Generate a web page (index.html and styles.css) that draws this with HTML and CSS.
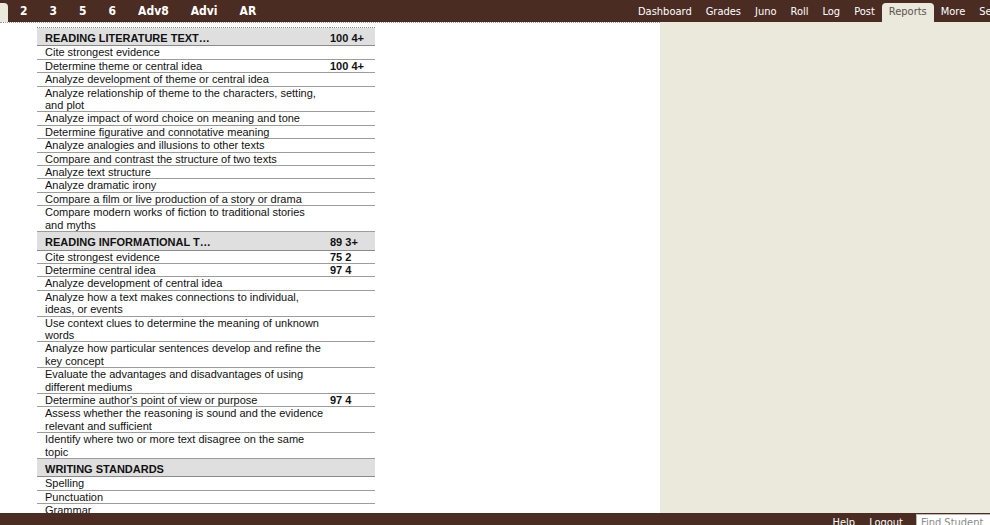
FILE: index.html
```html
<!DOCTYPE html>
<html>
<head>
<meta charset="utf-8">
<link rel="stylesheet" href="styles.css">
</head>
<body>
<div class="topbar">
  <nav class="nav-left">
    <span class="stub"></span>
    <a>2</a><a>3</a><a>5</a><a>6</a><a>Adv8</a><a>Advi</a><a>AR</a>
  </nav>
  <nav class="nav-right">
    <a>Dashboard</a><a>Grades</a><a>Juno</a><a>Roll</a><a>Log</a><a>Post</a><a class="active">Reports</a><a>More</a><a>Settings</a>
  </nav>
</div>
<div class="main">
  <div class="content">
    <table class="standards">
      <colgroup><col class="c-name"><col class="c-num"></colgroup>
      <tr class="head"><td>READING LITERATURE TEXT…</td><td class="num">100 4+</td></tr>
      <tr><td>Cite strongest evidence</td><td class="num"></td></tr>
      <tr><td>Determine theme or central idea</td><td class="num">100 4+</td></tr>
      <tr><td>Analyze development of theme or central idea</td><td class="num"></td></tr>
      <tr><td>Analyze relationship of theme to the characters, setting,<br>and plot</td><td class="num"></td></tr>
      <tr><td>Analyze impact of word choice on meaning and tone</td><td class="num"></td></tr>
      <tr><td>Determine figurative and connotative meaning</td><td class="num"></td></tr>
      <tr><td>Analyze analogies and illusions to other texts</td><td class="num"></td></tr>
      <tr><td>Compare and contrast the structure of two texts</td><td class="num"></td></tr>
      <tr><td>Analyze text structure</td><td class="num"></td></tr>
      <tr><td>Analyze dramatic irony</td><td class="num"></td></tr>
      <tr><td>Compare a film or live production of a story or drama</td><td class="num"></td></tr>
      <tr><td>Compare modern works of fiction to traditional stories<br>and myths</td><td class="num"></td></tr>
      <tr class="head"><td>READING INFORMATIONAL T…</td><td class="num">89 3+</td></tr>
      <tr><td>Cite strongest evidence</td><td class="num">75 2</td></tr>
      <tr><td>Determine central idea</td><td class="num">97 4</td></tr>
      <tr><td>Analyze development of central idea</td><td class="num"></td></tr>
      <tr><td>Analyze how a text makes connections to individual,<br>ideas, or events</td><td class="num"></td></tr>
      <tr><td>Use context clues to determine the meaning of unknown<br>words</td><td class="num"></td></tr>
      <tr><td>Analyze how particular sentences develop and refine the<br>key concept</td><td class="num"></td></tr>
      <tr><td>Evaluate the advantages and disadvantages of using<br>different mediums</td><td class="num"></td></tr>
      <tr><td>Determine author's point of view or purpose</td><td class="num">97 4</td></tr>
      <tr><td>Assess whether the reasoning is sound and the evidence<br>relevant and sufficient</td><td class="num"></td></tr>
      <tr><td>Identify where two or more text disagree on the same<br>topic</td><td class="num"></td></tr>
      <tr class="head"><td>WRITING STANDARDS</td><td class="num"></td></tr>
      <tr><td>Spelling</td><td class="num"></td></tr>
      <tr><td>Punctuation</td><td class="num"></td></tr>
      <tr><td>Grammar</td><td class="num"></td></tr>
    </table>
  </div>
  <div class="side"></div>
</div>
<div class="footer">
  <a>Help</a><a>Logout</a><input class="find" type="text" placeholder="Find Student">
</div>
</body>
</html>
```
FILE: styles.css
```css
* { box-sizing: border-box; }
html, body { margin: 0; height: 525px; overflow: hidden; }
body { font-family: "Liberation Sans", Arial, sans-serif; background: #fff; color: #111; }

.topbar {
  display: flex;
  height: 22px;
  background: #4a2c23;
  overflow: hidden;
}
.nav-left {
  flex: 0 0 631px;
  display: flex;
  align-items: flex-start;
}
.stub {
  flex: 0 0 8px;
  height: 19px;
  margin-top: 3px;
  background: #ebe8dc;
  border-top-right-radius: 4px;
}
.nav-left a {
  color: #fff;
  font: bold 12px "DejaVu Sans Condensed", "DejaVu Sans", sans-serif;
  line-height: 23px;
  padding: 0 11px;
}
.nav-left a:first-of-type { padding-left: 12px; }
.nav-right {
  display: flex;
  flex: none;
  align-items: flex-start;
}
.nav-right a {
  color: #fff;
  font: 11px "DejaVu Sans Condensed", "DejaVu Sans", sans-serif;
  line-height: 23px;
  padding: 0 7px;
  white-space: nowrap;
}
.nav-right a.active {
  background: #ebe8dc;
  color: #5a5550;
  margin-top: 3px;
  height: 19px;
  line-height: 17px;
  border-radius: 4px 4px 0 0;
}

.main {
  display: flex;
  height: 491px;
}
.content {
  flex: 0 0 660px;
  overflow: hidden;
  border-top: 1px dotted #9a9a9a;
  background: #fff;
}
.side {
  flex: 1;
  background: #ebe8dc;
}

.standards {
  margin: 4px 0 0 37px;
  width: 338px;
  border-collapse: collapse;
  table-layout: fixed;
}
.c-name { width: 293px; }
.c-num { width: 45px; }
.standards td {
  font-size: 11px;
  line-height: 12.4px;
  padding: 0 0 0 8px;
  border-bottom: 1px solid #9c9c9c;
  vertical-align: top;
  white-space: nowrap;
  color: #111;
}
.standards td.num {
  padding-left: 0;
  font-weight: bold;
}
.standards tr.head td {
  font-weight: bold;
  padding-top: 4px;
  padding-bottom: 1px;
  border-top: 1px dotted #8a8a8a;
  border-bottom: 1px solid #8a8a8a;
  background: repeating-conic-gradient(#d9d9d9 0 25%, #e5e5e5 0 50%) 0 0 / 2px 2px;
}

.footer {
  display: flex;
  justify-content: flex-end;
  align-items: flex-start;
  height: 30px;
  padding-top: 1px;
  background: #4a2c23;
  overflow: hidden;
}
.footer a {
  color: #fff;
  font: 11px "DejaVu Sans Condensed", "DejaVu Sans", sans-serif;
  line-height: 18px;
  padding: 0 7px;
}
.find {
  flex: none;
  width: 80px;
  height: 16px;
  margin: 0 -6px 0 6px;
  padding: 0 4px;
  border: 1px solid #bdb8b0;
  background: #fff;
  font: 11px "DejaVu Sans Condensed", "DejaVu Sans", sans-serif;
  color: #333;
}
.find::placeholder { color: #8a8a8a; }
```
